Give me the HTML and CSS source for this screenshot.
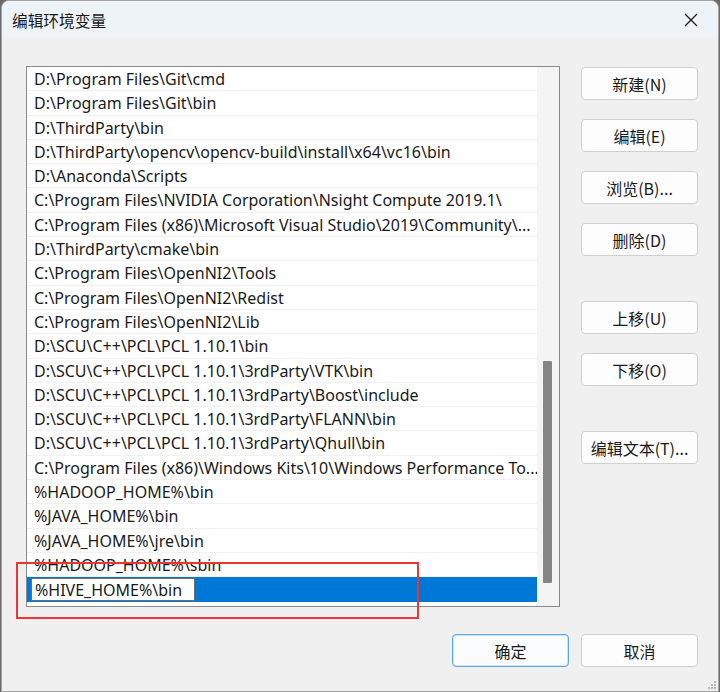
FILE: index.html
```html
<!DOCTYPE html>
<html lang="zh-CN">
<head>
    <meta charset="UTF-8">
    <title>编辑环境变量</title>
    <link rel="stylesheet" href="styles.css">
</head>
<body>
<div class="window">
    <!-- Title bar -->
    <div class="titlebar">
        <span class="title">编辑环境变量</span>
        <svg class="close" width="14" height="14" viewBox="0 0 14 14">
            <path d="M1 1 L13 13 M13 1 L1 13" stroke="#1a1a1a" stroke-width="1.3" fill="none"/>
        </svg>
    </div>

    <div class="content">
        <div class="main">
            <!-- Path list -->
            <div class="listbox">
                <ul class="rows">
                    <li>D:\Program Files\Git\cmd</li>
                    <li>D:\Program Files\Git\bin</li>
                    <li>D:\ThirdParty\bin</li>
                    <li>D:\ThirdParty\opencv\opencv-build\install\x64\vc16\bin</li>
                    <li>D:\Anaconda\Scripts</li>
                    <li>C:\Program Files\NVIDIA Corporation\Nsight Compute 2019.1\</li>
                    <li>C:\Program Files (x86)\Microsoft Visual Studio\2019\Community\...</li>
                    <li>D:\ThirdParty\cmake\bin</li>
                    <li>C:\Program Files\OpenNI2\Tools</li>
                    <li>C:\Program Files\OpenNI2\Redist</li>
                    <li>C:\Program Files\OpenNI2\Lib</li>
                    <li>D:\SCU\C++\PCL\PCL 1.10.1\bin</li>
                    <li>D:\SCU\C++\PCL\PCL 1.10.1\3rdParty\VTK\bin</li>
                    <li>D:\SCU\C++\PCL\PCL 1.10.1\3rdParty\Boost\include</li>
                    <li>D:\SCU\C++\PCL\PCL 1.10.1\3rdParty\FLANN\bin</li>
                    <li>D:\SCU\C++\PCL\PCL 1.10.1\3rdParty\Qhull\bin</li>
                    <li>C:\Program Files (x86)\Windows Kits\10\Windows Performance To...</li>
                    <li>%HADOOP_HOME%\bin</li>
                    <li>%JAVA_HOME%\bin</li>
                    <li>%JAVA_HOME%\jre\bin</li>
                    <li>%HADOOP_HOME%\sbin</li>
                    <li class="selected"><span class="editbox">%HIVE_HOME%\bin</span></li>
                </ul>
                <div class="scrollbar">
                    <div class="thumb"></div>
                </div>
            </div>

            <!-- Side buttons -->
            <div class="side">
                <button class="btn">新建(N)</button>
                <button class="btn">编辑(E)</button>
                <button class="btn">浏览(B)...</button>
                <button class="btn">删除(D)</button>
                <button class="btn gap">上移(U)</button>
                <button class="btn">下移(O)</button>
                <button class="btn gap">编辑文本(T)...</button>
            </div>
        </div>

        <div class="footer">
            <button class="btn default">确定</button>
            <button class="btn">取消</button>
        </div>
    </div>

    <!-- annotation -->
    <div class="mark"></div>

    <svg class="grip" width="10" height="10" viewBox="0 0 10 10">
        <rect x="7" y="1" width="2" height="2" fill="#b5b5b5"/>
        <rect x="4" y="4" width="2" height="2" fill="#b5b5b5"/>
        <rect x="7" y="4" width="2" height="2" fill="#b5b5b5"/>
        <rect x="1" y="7" width="2" height="2" fill="#b5b5b5"/>
        <rect x="4" y="7" width="2" height="2" fill="#b5b5b5"/>
        <rect x="7" y="7" width="2" height="2" fill="#b5b5b5"/>
    </svg>
</div>
</body>
</html>
```

FILE: styles.css
```css
body {
    margin: 0;
    padding: 0;
    background: #6b6b6b;
    font-family: "Noto Sans", "Noto Sans CJK SC", sans-serif;
    color: #1a1a1a;
}

.window {
    position: relative;
    box-sizing: border-box;
    width: 718px;
    height: 692px;
    margin-left: 1px;
    background: #f0f0f0;
    border: 1px solid #a3a3a3;
    border-radius: 8px 8px 0 0;
    overflow: hidden;
}

.titlebar {
    display: flex;
    align-items: center;
    justify-content: space-between;
    height: 38px;
    padding: 0 20px 0 10px;
    background: #eef3f8;
}

.title {
    font-family: "Noto Sans CJK SC", sans-serif;
    font-size: 15.7px;
}

.content {
    padding: 27px 20px 0 24px;
}

.main {
    display: flex;
    gap: 21px;
}

.listbox {
    box-sizing: border-box;
    display: flex;
    width: 534px;
    height: 541px;
    background: #fff;
    border: 1px solid #8a8a8a;
}

.rows {
    list-style: none;
    margin: 0;
    padding: 0;
    width: 510px;
}

.rows li {
    box-sizing: border-box;
    height: 24.3px;
    line-height: 25px;
    padding-left: 7px;
    font-size: 16px;
    white-space: nowrap;
    border-bottom: 1.3px solid #f1f1f1;
}

.rows li.selected {
    background: #0078d7;
    padding-left: 4px;
    padding-top: 1px;
    border-bottom: none;
}

.editbox {
    display: inline-block;
    box-sizing: border-box;
    width: 164px;
    height: 23px;
    line-height: 22px;
    padding-left: 3px;
    background: #fff;
    border: 1px solid #6e6e6e;
    vertical-align: top;
}

.scrollbar {
    flex: 1;
    background: #f4f4f4;
    padding: 294px 0 0 6px;
}

.thumb {
    width: 9px;
    height: 222px;
    background: #858585;
    border-radius: 1px;
}

.side {
    display: flex;
    flex-direction: column;
    padding-top: 1px;
    gap: 19px;
}

.btn {
    box-sizing: border-box;
    width: 117px;
    height: 33px;
    background: #fdfdfd;
    border: 1px solid #d0d0d0;
    border-radius: 4px;
    font-family: "Noto Sans CJK SC", sans-serif;
    font-size: 16px;
    color: #1a1a1a;
    padding: 0;
}

.side .gap {
    margin-top: 26px;
}

.footer {
    display: flex;
    justify-content: flex-end;
    gap: 12px;
    margin-top: 27px;
}

.btn.default {
    background: #fbfcfd;
    border: 1px solid #5ea6e0;
    box-shadow: inset 0 0 0 1px #cfe4f6;
}

.mark {
    position: absolute;
    left: 14px;
    top: 561px;
    width: 399px;
    height: 53px;
    border: 2px solid #ee3536;
}

.grip {
    position: absolute;
    right: 1px;
    bottom: 1px;
}
```
